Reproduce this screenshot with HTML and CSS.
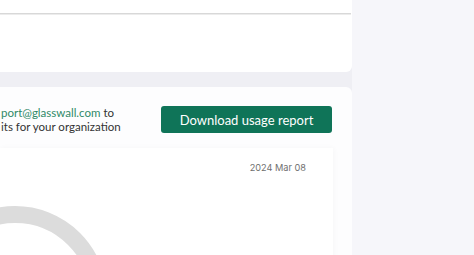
FILE: index.html
```html
<!DOCTYPE html>
<html lang="en">
<head>
<meta charset="utf-8">
<title>Usage</title>
<link rel="stylesheet" href="styles.css">
</head>
<body>
<div class="layout">
  <main class="main">
    <section class="card card-top">
      <div class="divider"></div>
    </section>
    <section class="card card-usage">
      <div class="usage-head">
        <p class="usage-note"><a class="mail" href="#">port@glasswall.com</a> to<br>its for your organization</p>
        <button class="btn-download" type="button">Download usage report</button>
      </div>
      <div class="chart-card">
        <div class="chart-date">2024 Mar 08</div>
        <svg class="donut" width="200" height="80" viewBox="0 0 200 80" aria-hidden="true">
          <circle cx="15" cy="110" r="83.5" fill="none" stroke="#dcdcdc" stroke-width="17"/>
        </svg>
      </div>
    </section>
  </main>
  <aside class="side"></aside>
</div>
</body>
</html>
```
FILE: styles.css
```css
html, body {
  margin: 0;
  padding: 0;
  height: 100%;
  overflow: hidden;
}
body {
  font-family: Lato, "Liberation Sans", sans-serif;
  color: #333;
  background: #f6f6fa;
}
.layout {
  display: flex;
  height: 100%;
}
.main {
  width: 352px;
  flex: none;
  display: flex;
  flex-direction: column;
  gap: 15px;
  background: #efeff4;
}
.side {
  flex: 1;
  background: #f6f6fa;
}
.card {
  background: #fff;
  flex: none;
}
.card-top {
  height: 72px;
  border-bottom-right-radius: 6px;
  padding-top: 13px;
  box-sizing: border-box;
}
.divider {
  height: 1px;
  background: #d8d8d8;
  margin-right: 1px;
  box-shadow: 0 1px 0 #ececec;
}
.card-usage {
  border-top-right-radius: 6px;
  padding: 19px 19px 0 0;
  background: #fdfdfe;
}
.usage-head {
  display: flex;
  justify-content: space-between;
  align-items: flex-start;
}
.usage-note {
  margin: 0;
  padding: 0 0 0 1px;
  font-size: 11.5px;
  line-height: 14px;
  color: #333;
}
.mail {
  color: #2f8a68;
  text-decoration: none;
}
.btn-download {
  width: 171px;
  height: 27px;
  margin-right: 1px;
  border: 0;
  border-radius: 3px;
  background: #0f7458;
  color: #fff;
  font-family: Lato, "Liberation Sans", sans-serif;
  font-size: 13px;
  padding: 0;
  cursor: pointer;
}
.chart-card {
  margin-top: 14px;
  background: #fff;
  box-shadow: 1px 0 6px rgba(0, 0, 0, 0.03);
  padding-top: 14px;
  height: 300px;
}
.chart-date {
  text-align: right;
  padding-right: 27px;
  font-family: Inter, "Open Sans", sans-serif;
  font-size: 9.2px;
  color: #6f6f6f;
  line-height: 12px;
}
.donut {
  display: block;
  margin-top: 14px;
}
```
